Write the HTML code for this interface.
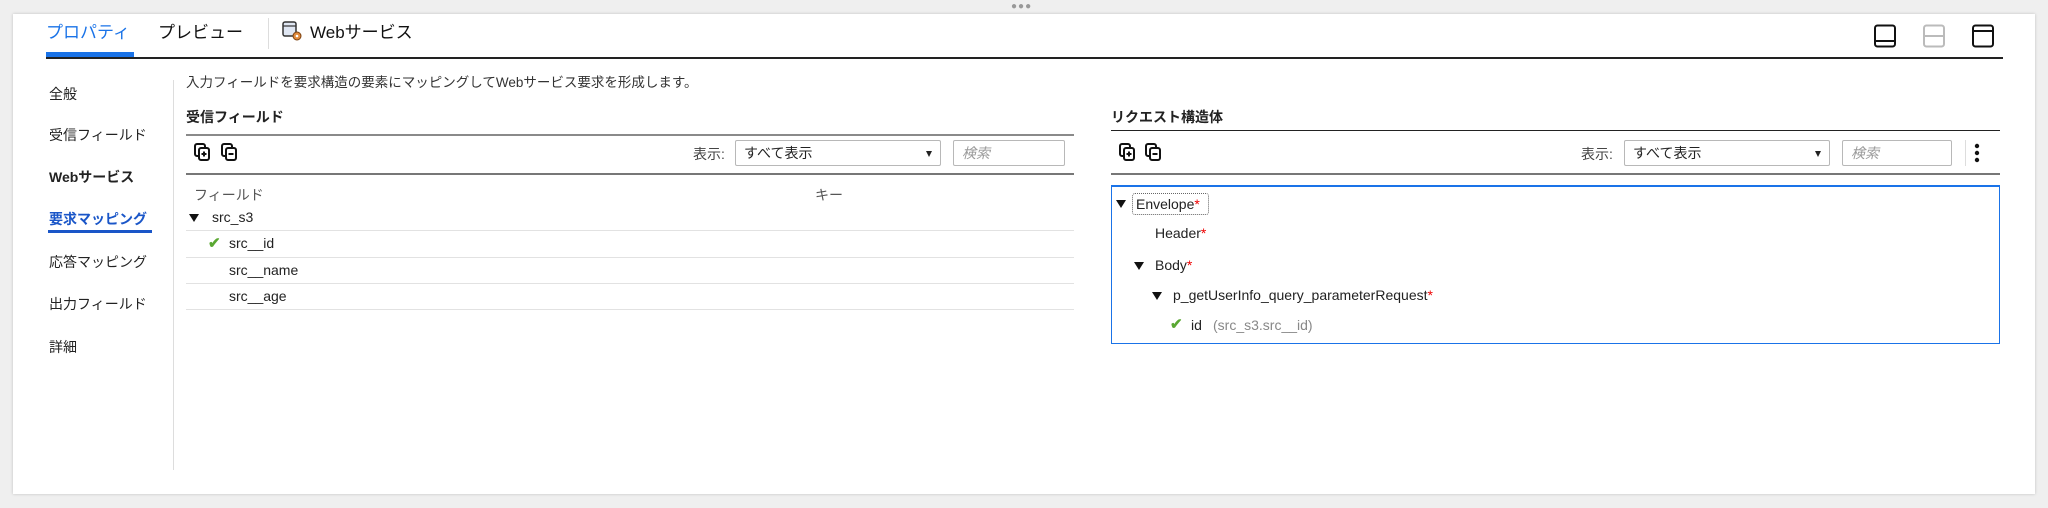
<!DOCTYPE html>
<html><head><meta charset="utf-8"><style>
*{margin:0;padding:0;box-sizing:border-box}
body{width:2048px;height:508px;background:#efefef;position:relative;overflow:hidden;font-family:"Liberation Sans","Noto Sans CJK JP",sans-serif;font-size:14px;color:#222}
.a{position:absolute;white-space:nowrap}
#panel{position:absolute;left:13px;top:14px;width:2022px;height:480px;background:#fff;box-shadow:0 0 3px rgba(0,0,0,.2)}
.nav{position:absolute;left:49px;font-size:14px;line-height:20px}
.row{position:absolute;height:1px;background:#e2e2e2}
.tri{position:absolute;width:0;height:0;border-left:5px solid transparent;border-right:5px solid transparent;border-top:8px solid #111}
.sel{position:absolute;height:26px;border:1px solid #b8b8b8;border-radius:2px;font-size:14px;padding:4px 8px;line-height:16px}
.sel:after{content:"";position:absolute;right:8px;top:10px;border-left:3px solid transparent;border-right:3px solid transparent;border-top:6px solid #222}
.srch{position:absolute;height:26px;border:1px solid #b8b8b8;border-radius:2px;font-size:14px;padding:4px 8px;color:#999;font-style:italic;line-height:16px}
.red{color:#e00}
</style></head><body>
<div class="a" style="left:1011px;top:1px;font-size:10px;color:#999;letter-spacing:1px">●●●</div>
<div id="panel"></div>
<div class="a" style="left:46px;top:18px;font-size:17px;color:#1a73e8">プロパティ</div>
<div class="a" style="left:158px;top:18px;font-size:17px;color:#111">プレビュー</div>
<div class="a" style="left:268px;top:18px;width:1px;height:31px;background:#ddd"></div>
<svg class="a" style="left:282px;top:20px" width="22" height="22" viewBox="0 0 22 22"><rect x="1" y="2" width="13" height="14" rx="2" fill="#dfe6f2" stroke="#333" stroke-width="1.5"/><line x1="1" y1="6" x2="14" y2="6" stroke="#333" stroke-width="1.2"/><circle cx="15" cy="16" r="4" fill="#e08a3c" stroke="#7a4010" stroke-width="1"/><circle cx="15" cy="16" r="1.3" fill="#fff"/></svg>
<div class="a" style="left:310px;top:18px;font-size:17px;color:#111">Webサービス</div>
<div class="a" style="left:46px;top:52px;width:88px;height:5px;background:#1a73e8"></div>
<div class="a" style="left:46px;top:57px;width:1957px;height:2px;background:#222"></div>
<svg class="a" style="left:1873px;top:24px" width="24" height="24" viewBox="0 0 24 24"><rect x="2" y="1.5" width="20" height="21" rx="2.5" fill="none" stroke="#111" stroke-width="2"/><line x1="2" y1="17" x2="22" y2="17" stroke="#111" stroke-width="2"/></svg>
<svg class="a" style="left:1922px;top:24px" width="24" height="24" viewBox="0 0 24 24"><rect x="2" y="1.5" width="20" height="21" rx="2.5" fill="none" stroke="#bbb" stroke-width="2"/><line x1="2" y1="12" x2="22" y2="12" stroke="#bbb" stroke-width="2"/></svg>
<svg class="a" style="left:1971px;top:24px" width="24" height="24" viewBox="0 0 24 24"><rect x="2" y="1.5" width="20" height="21" rx="2.5" fill="none" stroke="#111" stroke-width="2"/><line x1="2" y1="7" x2="22" y2="7" stroke="#111" stroke-width="2"/></svg>
<div class="nav" style="top:84px">全般</div>
<div class="nav" style="top:125px">受信フィールド</div>
<div class="nav" style="top:167px;font-weight:bold">Webサービス</div>
<div class="nav" style="top:209px;font-weight:bold;color:#1a56c8">要求マッピング</div>
<div class="a" style="left:48px;top:230px;width:104px;height:3px;background:#1a56c8"></div>
<div class="nav" style="top:252px">応答マッピング</div>
<div class="nav" style="top:294px">出力フィールド</div>
<div class="nav" style="top:337px">詳細</div>
<div class="a" style="left:173px;top:80px;width:1px;height:390px;background:#ddd"></div>
<div class="a" style="left:186px;top:71px;font-size:13.5px;color:#333">入力フィールドを要求構造の要素にマッピングしてWebサービス要求を形成します。</div>
<div class="a" style="left:186px;top:107px;font-weight:bold;font-size:14px">受信フィールド</div>
<div class="a" style="left:186px;top:134px;width:888px;height:2px;background:#8a8a8a"></div>
<svg class="a" style="left:194px;top:143px" width="48" height="20" viewBox="0 0 48 20"><g fill="none" stroke="#111" stroke-width="2"><rect x="1" y="1" width="10" height="12" rx="2"/><rect x="5" y="5" width="10" height="12" rx="2" fill="#fff"/><line x1="7.5" y1="11" x2="12.5" y2="11"/><line x1="10" y1="8.5" x2="10" y2="13.5"/><rect x="28" y="1" width="10" height="12" rx="2"/><rect x="32" y="5" width="10" height="12" rx="2" fill="#fff"/><line x1="34.5" y1="11" x2="39.5" y2="11"/></g></svg>
<div class="a" style="left:693px;top:144px;color:#444">表示:</div>
<div class="sel" style="left:735px;top:140px;width:206px">すべて表示</div>
<div class="srch" style="left:953px;top:140px;width:112px">検索</div>
<div class="a" style="left:186px;top:173px;width:888px;height:2px;background:#777"></div>
<div class="a" style="left:194px;top:185px;color:#555">フィールド</div>
<div class="a" style="left:815px;top:185px;color:#555">キー</div>
<div class="tri" style="left:189px;top:214px"></div>
<div class="a" style="left:212px;top:209px">src_s3</div>
<div class="row" style="left:186px;top:230px;width:888px"></div>
<div class="a" style="left:208px;top:234px;color:#5aa832;font-size:15px;font-weight:bold">✔</div>
<div class="a" style="left:229px;top:235px">src__id</div>
<div class="row" style="left:186px;top:257px;width:888px"></div>
<div class="a" style="left:229px;top:262px">src__name</div>
<div class="row" style="left:186px;top:283px;width:888px"></div>
<div class="a" style="left:229px;top:288px">src__age</div>
<div class="row" style="left:186px;top:309px;width:888px"></div>
<div class="a" style="left:1111px;top:107px;font-weight:bold">リクエスト構造体</div>
<div class="a" style="left:1111px;top:130px;width:889px;height:1px;background:#222"></div>
<svg class="a" style="left:1119px;top:143px" width="48" height="20" viewBox="0 0 48 20"><g fill="none" stroke="#111" stroke-width="2"><rect x="1" y="1" width="10" height="12" rx="2"/><rect x="5" y="5" width="10" height="12" rx="2" fill="#fff"/><line x1="7.5" y1="11" x2="12.5" y2="11"/><line x1="10" y1="8.5" x2="10" y2="13.5"/><rect x="27" y="1" width="10" height="12" rx="2"/><rect x="31" y="5" width="10" height="12" rx="2" fill="#fff"/><line x1="33.5" y1="11" x2="38.5" y2="11"/></g></svg>
<div class="a" style="left:1581px;top:144px;color:#444">表示:</div>
<div class="sel" style="left:1624px;top:140px;width:206px">すべて表示</div>
<div class="srch" style="left:1842px;top:140px;width:110px">検索</div>
<div class="a" style="left:1965px;top:140px;width:1px;height:26px;background:#ddd"></div>
<svg class="a" style="left:1973px;top:142px" width="8" height="22" viewBox="0 0 8 22"><circle cx="4" cy="4" r="2.2" fill="#111"/><circle cx="4" cy="11" r="2.2" fill="#111"/><circle cx="4" cy="18" r="2.2" fill="#111"/></svg>
<div class="a" style="left:1111px;top:173px;width:889px;height:2px;background:#777"></div>
<div class="a" style="left:1111px;top:185px;width:889px;height:159px;border:1.5px solid #1a73e8;border-top-width:2px"></div>
<div class="tri" style="left:1116px;top:200px"></div>
<div class="a" style="left:1132px;top:193px;width:77px;height:22px;border:1px dotted #666;border-radius:3px;padding:2px 0 0 3px">Envelope<span class="red">*</span></div>
<div class="a" style="left:1155px;top:225px">Header<span class="red">*</span></div>
<div class="tri" style="left:1134px;top:262px"></div>
<div class="a" style="left:1155px;top:257px">Body<span class="red">*</span></div>
<div class="tri" style="left:1152px;top:292px"></div>
<div class="a" style="left:1173px;top:287px">p_getUserInfo_query_parameterRequest<span class="red">*</span></div>
<div class="a" style="left:1170px;top:315px;color:#5aa832;font-size:15px;font-weight:bold">✔</div>
<div class="a" style="left:1191px;top:317px">id</div>
<div class="a" style="left:1213px;top:317px;color:#888">(src_s3.src__id)</div>
</body></html>
